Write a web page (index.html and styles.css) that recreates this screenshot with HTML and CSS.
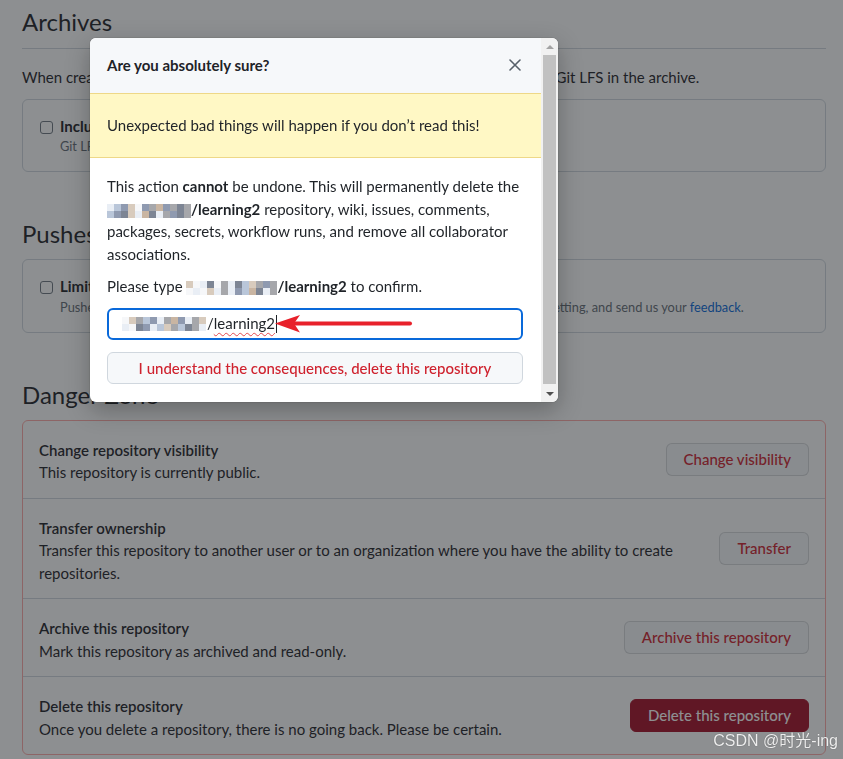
FILE: index.html
```html
<!DOCTYPE html>
<html lang="en">
<head>
<meta charset="utf-8">
<title>Settings</title>
<link rel="stylesheet" href="styles.css">
</head>
<body>
<main class="page">
  <h2 class="subhead subhead-first">Archives</h2>
  <p class="lead">When creating source code archives, you can choose to include files stored using Git LFS in the archive.</p>
  <div class="box">
    <div class="check-row">
      <span class="cb"></span>
      <div>
        <div class="cb-label">Include Git LFS objects in archives</div>
        <div class="note">Git LFS usage in archives is billed at the same rate as usage with the client.</div>
      </div>
    </div>
  </div>

  <h2 class="subhead">Pushes</h2>
  <div class="box">
    <div class="check-row">
      <span class="cb"></span>
      <div>
        <div class="cb-label">Limit how many branches and tags can be updated in a single push <span class="beta">Beta</span></div>
        <div class="note">Pushes will be rejected if they attempt to update more than this. Learn more about this setting, and send us your <a class="link" href="#">feedback</a>.</div>
      </div>
    </div>
  </div>

  <h2 class="subhead">Danger Zone</h2>
  <div class="box box-danger">
    <div class="row">
      <div class="row-text">
        <div class="row-title">Change repository visibility</div>
        <div>This repository is currently public.</div>
      </div>
      <button class="btn btn-red">Change visibility</button>
    </div>
    <div class="row">
      <div class="row-text">
        <div class="row-title">Transfer ownership</div>
        <div>Transfer this repository to another user or to an organization where you have the ability to create repositories.</div>
      </div>
      <button class="btn btn-red">Transfer</button>
    </div>
    <div class="row">
      <div class="row-text">
        <div class="row-title">Archive this repository</div>
        <div>Mark this repository as archived and read-only.</div>
      </div>
      <button class="btn btn-red">Archive this repository</button>
    </div>
    <div class="row">
      <div class="row-text">
        <div class="row-title">Delete this repository</div>
        <div>Once you delete a repository, there is no going back. Please be certain.</div>
      </div>
      <button class="btn btn-danger">Delete this repository</button>
    </div>
  </div>
</main>

<div class="overlay"></div>

<div class="dialog">
  <div class="dialog-main">
    <div class="dialog-header">
      <span class="dialog-title">Are you absolutely sure?</span>
      <span class="close">
        <svg width="12" height="12" viewBox="0 0 12 12"><path d="M1 1 L11 11 M11 1 L1 11" stroke="#57606a" stroke-width="1.6" stroke-linecap="round" fill="none"/></svg>
      </span>
    </div>
    <div class="flash">Unexpected bad things will happen if you don’t read this!</div>
    <div class="dialog-body">
      <p>This action <strong>cannot</strong> be undone. This will permanently delete the <span class="mosaic m12"><i class="a"></i><i class="b"></i><i class="c"></i><i class="d"></i><i class="h"></i><i class="c"></i><i class="e"></i><i class="g"></i><i class="c"></i><i class="e"></i><i class="f"></i><i class="e"></i><i class="b"></i><i class="c"></i><i class="f"></i><i class="d"></i><i class="a"></i><i class="g"></i><i class="f"></i><i class="a"></i><i class="e"></i><i class="c"></i><i class="f"></i><i class="e"></i></span><strong>/learning2</strong> repository, wiki, issues, comments, packages, secrets, workflow runs, and remove all collaborator associations.</p>
      <p>Please type <span class="mosaic m13"><i class="d"></i><i class="h"></i><i class="a"></i><i class="f"></i><i class="h"></i><i class="e"></i><i class="a"></i><i class="f"></i><i class="b"></i><i class="d"></i><i class="e"></i><i class="c"></i><i class="e"></i><i class="h"></i><i class="a"></i><i class="h"></i><i class="d"></i><i class="a"></i><i class="e"></i><i class="a"></i><i class="c"></i><i class="b"></i><i class="g"></i><i class="f"></i><i class="a"></i><i class="e"></i></span><strong>/learning2</strong> to confirm.</p>
      <div class="input-wrap">
        <div class="input">
          <span class="mosaic m12"><i class="h"></i><i class="d"></i><i class="e"></i><i class="b"></i><i class="c"></i><i class="a"></i><i class="e"></i><i class="g"></i><i class="c"></i><i class="a"></i><i class="e"></i><i class="d"></i><i class="a"></i><i class="h"></i><i class="f"></i><i class="c"></i><i class="a"></i><i class="b"></i><i class="d"></i><i class="e"></i><i class="b"></i><i class="f"></i><i class="e"></i><i class="a"></i></span><span class="typed">/<span class="squiggle">learning2</span></span><span class="caret"></span>
        </div>
        <svg class="arrow" width="140" height="20" viewBox="0 0 140 20">
          <line x1="18" y1="9.5" x2="135" y2="9.5" stroke="#e8212b" stroke-width="4" stroke-linecap="round"/>
          <path d="M0 9.5 L25 1 L19 9.5 L25 18.5 Z" fill="#e8212b"/>
        </svg>
      </div>
      <button class="btn-confirm">I understand the consequences, delete this repository</button>
    </div>
  </div>
  <div class="scrollbar">
    <div class="sb-btn"><span class="tri-up"></span></div>
    <div class="sb-track"><div class="sb-thumb"></div></div>
    <div class="sb-btn"><span class="tri-down"></span></div>
  </div>
</div>

<div class="watermark">CSDN @时光-ing</div>
</body>
</html>
```

FILE: styles.css
```css
* { box-sizing: border-box; }

html, body {
  margin: 0;
  background: #ffffff;
}

body {
  font-family: Lato, "Liberation Sans", "Noto Sans CJK SC", sans-serif;
  font-size: 15px;
  line-height: 22.5px;
  color: #1f2328;
  width: 843px;
  height: 759px;
  overflow: hidden;
}

.page {
  padding: 4px 17px 0 22px;
}

.subhead {
  margin: 44px 0 0;
  font-size: 24px;
  font-weight: 400;
  line-height: 36px;
  padding-bottom: 7px;
}

.subhead-first {
  margin-top: 0;
  padding-bottom: 8px;
  border-bottom: 1px solid #d0d7de;
}

.lead {
  margin: 17px 0 10px;
}

.box {
  border: 1px solid #d0d7de;
  border-radius: 6px;
}

.check-row {
  display: flex;
  align-items: flex-start;
  padding: 16px 17px;
  gap: 7px;
}

.cb {
  flex: none;
  width: 13px;
  height: 13px;
  margin-top: 5px;
  border: 1px solid #6e7781;
  border-radius: 3px;
  background: #fff;
}

.cb-label {
  font-weight: 700;
  line-height: 21px;
}

.note {
  font-size: 12.8px;
  line-height: 18px;
  color: #656d76;
}

.link {
  color: #0969da;
  text-decoration: none;
}

.beta {
  display: inline-block;
  font-size: 12px;
  font-weight: 500;
  line-height: 18px;
  padding: 0 7px;
  border: 1px solid #1a7f37;
  border-radius: 2em;
  color: #1a7f37;
}

.box-danger {
  border-color: #ffaba8;
}

.row {
  display: flex;
  align-items: center;
  justify-content: space-between;
  padding: 18px 16px 14px;
  border-top: 1px solid #d0d7de;
  line-height: 22.5px;
}

.row:first-child {
  border-top: none;
}

.row-text {
  flex: 1;
}

.row-title {
  font-weight: 600;
}

.btn {
  flex: none;
  margin: -4px 0 0 16px;
  font-family: inherit;
  font-size: 15px;
  font-weight: 500;
  line-height: 21px;
  padding: 5px 17px;
  border-radius: 6px;
  border: 1px solid rgba(31, 35, 40, 0.15);
  background: #f6f8fa;
}

.btn-red {
  color: #cf222e;
}

.btn-danger {
  color: #ffffff;
  background: #a40e26;
  border-color: #a40e26;
}

.overlay {
  position: fixed;
  inset: 0;
  background: rgba(27, 31, 36, 0.5);
}

.dialog {
  position: fixed;
  left: 90px;
  top: 38px;
  width: 468px;
  height: 364px;
  display: flex;
  background: #ffffff;
  border-radius: 6px;
  overflow: hidden;
  box-shadow: 0 8px 24px rgba(0, 0, 0, 0.28), 0 0 0 1px rgba(0, 0, 0, 0.06);
}

.dialog-main {
  flex: 1;
  overflow: hidden;
}

.dialog-header {
  display: flex;
  align-items: center;
  justify-content: space-between;
  background: #f6f8fa;
  padding: 16px 18px 16px 17px;
}

.dialog-title {
  font-weight: 700;
}

.close {
  display: flex;
  width: 16px;
  height: 16px;
  align-items: center;
  justify-content: center;
}

.flash {
  background: #fff8c5;
  border-top: 1px solid #eed888;
  border-bottom: 1px solid #eed888;
  padding: 20.5px 18px 20.5px 17px;
}

.dialog-body {
  padding: 17px 18px 16px 17px;
}

.dialog-body p {
  margin: 0 0 10px;
}

.mosaic {
  display: inline-block;
  overflow: hidden;
  height: 14px;
  font-size: 0;
  line-height: 0;
  vertical-align: -3px;
}

.m12 { width: 84px; }
.m13 { width: 91px; }

.mosaic i {
  display: inline-block;
  width: 7px;
  height: 7px;
  vertical-align: top;
}

.mosaic .a { background: #e9eef5; }
.mosaic .b { background: #b9c6d9; }
.mosaic .c { background: #8f9ab0; }
.mosaic .d { background: #d8cbbd; }
.mosaic .e { background: #a6a7ab; }
.mosaic .f { background: #7d8594; }
.mosaic .g { background: #c9b5a2; }
.mosaic .h { background: #f6f7f9; }

.input-wrap {
  position: relative;
  margin: 10px 0 12px;
}

.input {
  height: 32px;
  border: 2px solid #0969da;
  border-radius: 6px;
  padding: 0 13px;
  display: flex;
  align-items: center;
}

.typed {
  margin-left: 1px;
}

.squiggle {
  text-decoration: underline wavy #e5484d;
  text-decoration-thickness: 1px;
  text-underline-offset: 3px;
}

.caret {
  display: inline-block;
  width: 1px;
  height: 18px;
  background: #1f2328;
  margin-left: 1px;
}

.arrow {
  position: absolute;
  left: 168px;
  top: 6px;
}

.btn-confirm {
  display: block;
  width: 100%;
  height: 32px;
  font-family: inherit;
  font-size: 15px;
  font-weight: 500;
  color: #cf222e;
  background: #f6f8fa;
  border: 1px solid #d0d7de;
  border-radius: 6px;
}

.scrollbar {
  flex: none;
  width: 17px;
  display: flex;
  flex-direction: column;
  background: #f1f1f1;
}

.sb-btn {
  height: 17px;
  display: flex;
  align-items: center;
  justify-content: center;
}

.sb-track {
  flex: 1;
  padding: 0 2px 1px;
}

.sb-thumb {
  height: 100%;
  background: #c1c1c1;
}

.tri-up {
  width: 0;
  height: 0;
  border-left: 4px solid transparent;
  border-right: 4px solid transparent;
  border-bottom: 4px solid #a3a3a3;
}

.tri-down {
  width: 0;
  height: 0;
  border-left: 4px solid transparent;
  border-right: 4px solid transparent;
  border-top: 4px solid #505050;
}

.watermark {
  position: fixed;
  right: 5px;
  bottom: 8px;
  font-family: "Liberation Sans", "Noto Sans CJK SC", sans-serif;
  font-size: 16px;
  line-height: 20px;
  color: #eeeeee;
  text-shadow: 0 0 1px rgba(0, 0, 0, 0.45);
}
```
